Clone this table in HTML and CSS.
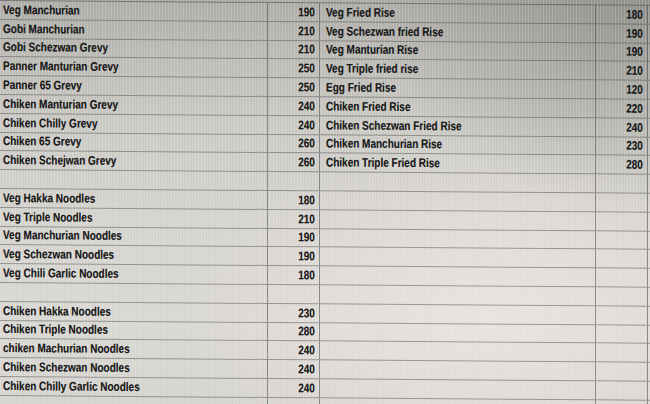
FILE: index.html
```html
<!DOCTYPE html>
<html>
<head>
<meta charset="utf-8">
<link rel="stylesheet" href="styles.css">
</head>
<body>
<div class="photo">
  <div class="sheet">
    <div class="c n"><span>Veg Manchurian</span></div><div class="c p"><span>190</span></div><div class="c n r"><span>Veg Fried Rise</span></div><div class="c p"><span>180</span></div><div class="c e"></div>
    <div class="c n"><span>Gobi Manchurian</span></div><div class="c p"><span>210</span></div><div class="c n r"><span>Veg Schezwan fried Rise</span></div><div class="c p"><span>190</span></div><div class="c e"></div>
    <div class="c n"><span>Gobi Schezwan Grevy</span></div><div class="c p"><span>210</span></div><div class="c n r"><span>Veg Manturian Rise</span></div><div class="c p"><span>190</span></div><div class="c e"></div>
    <div class="c n"><span>Panner Manturian Grevy</span></div><div class="c p"><span>250</span></div><div class="c n r"><span>Veg Triple fried rise</span></div><div class="c p"><span>210</span></div><div class="c e"></div>
    <div class="c n"><span>Panner 65 Grevy</span></div><div class="c p"><span>250</span></div><div class="c n r"><span>Egg Fried Rise</span></div><div class="c p"><span>120</span></div><div class="c e"></div>
    <div class="c n"><span>Chiken Manturian Grevy</span></div><div class="c p"><span>240</span></div><div class="c n r"><span>Chiken Fried Rise</span></div><div class="c p"><span>220</span></div><div class="c e"></div>
    <div class="c n"><span>Chiken Chilly Grevy</span></div><div class="c p"><span>240</span></div><div class="c n r"><span>Chiken Schezwan Fried Rise</span></div><div class="c p"><span>240</span></div><div class="c e"></div>
    <div class="c n"><span>Chiken 65 Grevy</span></div><div class="c p"><span>260</span></div><div class="c n r"><span>Chiken Manchurian Rise</span></div><div class="c p"><span>230</span></div><div class="c e"></div>
    <div class="c n"><span>Chiken Schejwan Grevy</span></div><div class="c p"><span>260</span></div><div class="c n r"><span>Chiken Triple Fried Rise</span></div><div class="c p"><span>280</span></div><div class="c e"></div>
    <div class="c n"></div><div class="c p"></div><div class="c n r"></div><div class="c p"></div><div class="c e"></div>
    <div class="c n"><span>Veg Hakka Noodles</span></div><div class="c p"><span>180</span></div><div class="c n r"></div><div class="c p"></div><div class="c e"></div>
    <div class="c n"><span>Veg Triple Noodles</span></div><div class="c p"><span>210</span></div><div class="c n r"></div><div class="c p"></div><div class="c e"></div>
    <div class="c n"><span>Veg Manchurian Noodles</span></div><div class="c p"><span>190</span></div><div class="c n r"></div><div class="c p"></div><div class="c e"></div>
    <div class="c n"><span>Veg Schezwan Noodles</span></div><div class="c p"><span>190</span></div><div class="c n r"></div><div class="c p"></div><div class="c e"></div>
    <div class="c n"><span>Veg Chili Garlic Noodles</span></div><div class="c p"><span>180</span></div><div class="c n r"></div><div class="c p"></div><div class="c e"></div>
    <div class="c n"></div><div class="c p"></div><div class="c n r"></div><div class="c p"></div><div class="c e"></div>
    <div class="c n"><span>Chiken Hakka Noodles</span></div><div class="c p"><span>230</span></div><div class="c n r"></div><div class="c p"></div><div class="c e"></div>
    <div class="c n"><span>Chiken Triple Noodles</span></div><div class="c p"><span>280</span></div><div class="c n r"></div><div class="c p"></div><div class="c e"></div>
    <div class="c n"><span>chiken Machurian Noodles</span></div><div class="c p"><span>240</span></div><div class="c n r"></div><div class="c p"></div><div class="c e"></div>
    <div class="c n"><span>Chiken Schezwan Noodles</span></div><div class="c p"><span>240</span></div><div class="c n r"></div><div class="c p"></div><div class="c e"></div>
    <div class="c n"><span>Chiken Chilly Garlic Noodles</span></div><div class="c p"><span>240</span></div><div class="c n r"></div><div class="c p"></div><div class="c e"></div>
    <div class="c n"></div><div class="c p"></div><div class="c n r"></div><div class="c p"></div><div class="c e"></div>
  </div>
</div>
</body>
</html>
```
FILE: styles.css
```css
html, body {
  margin: 0;
  padding: 0;
}
body {
  width: 650px;
  height: 404px;
  overflow: hidden;
  background:
    radial-gradient(ellipse 280px 210px at 100% 0%, rgba(115,115,110,0.5), transparent 100%),
    radial-gradient(ellipse 300px 180px at 75% 78%, rgba(238,230,228,0.75), transparent 100%),
    linear-gradient(180deg, #adaca7 0%, #bbbab5 14%, #cbcac5 32%, #d5d3ce 55%, #d9d7d2 80%, #d5d3ce 100%);
}
.photo {
  width: 650px;
  height: 404px;
  background: repeating-linear-gradient(90deg, rgba(255,255,255,0.16) 0 1px, rgba(255,255,255,0) 1px 3px);
}
.sheet {
  display: grid;
  grid-template-columns: 268px 52px 276px 52px 2px;
  grid-auto-rows: 18.8px;
  border-top: 1px solid rgba(70,70,70,0.55);
  transform: skewY(0.42deg);
  transform-origin: 0 0;
  font-family: "Liberation Sans", Arial, sans-serif;
  font-weight: 700;
  font-size: 12.5px;
  color: #1a1a1a;
}
.c {
  border-bottom: 1px solid rgba(80,80,80,0.5);
  border-right: 1px solid rgba(70,70,70,0.55);
  display: flex;
  align-items: center;
  overflow: visible;
  white-space: nowrap;
  box-sizing: border-box;
}
.c span {
  display: inline-block;
  transform: scaleX(0.8);
  text-shadow: 0 0 0.5px rgba(0,0,0,0.35);
}
.n {
  padding-left: 3px;
}
.n span {
  transform-origin: left center;
}
.n.r {
  padding-left: 6px;
}
.p {
  justify-content: flex-end;
  padding-right: 4px;
}
.p span {
  transform-origin: right center;
}
.e {
  border-right: none;
}
```
